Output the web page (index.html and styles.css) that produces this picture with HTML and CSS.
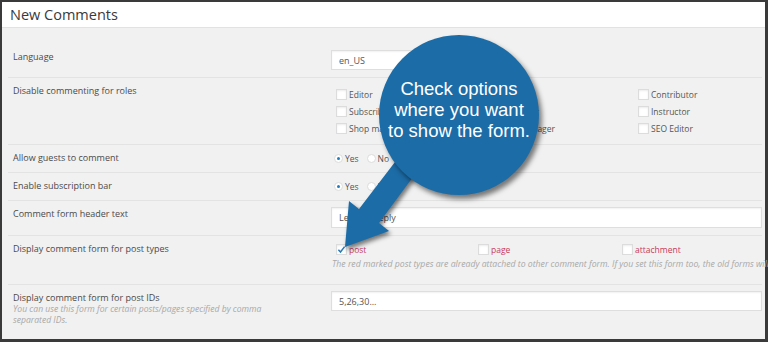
FILE: index.html
```html
<!DOCTYPE html>
<html>
<head>
<meta charset="utf-8">
<link rel="stylesheet" href="styles.css">
</head>
<body>
<div class="shot">
  <div class="frame">
    <div class="hd">New Comments</div>
    <div class="panel">
      <div class="row first">
        <div class="lbl">Language</div>
        <div class="fld"><div class="inp short">en_US</div></div>
      </div>
      <div class="row">
        <div class="lbl">Disable commenting for roles</div>
        <div class="fld">
          <div class="checks roles">
            <label class="opt"><span class="cb"></span>Editor</label>
            <label class="opt"><span class="cb"></span>Author</label>
            <label class="opt"><span class="cb"></span>Contributor</label>
            <label class="opt"><span class="cb"></span>Subscriber</label>
            <label class="opt"><span class="cb"></span>Customer</label>
            <label class="opt"><span class="cb"></span>Instructor</label>
            <label class="opt"><span class="cb"></span>Shop manager</label>
            <label class="opt"><span class="cb"></span>Blog manager</label>
            <label class="opt"><span class="cb"></span>SEO Editor</label>
          </div>
        </div>
      </div>
      <div class="row">
        <div class="lbl">Allow guests to comment</div>
        <div class="fld">
          <div class="radios">
            <span class="rd on"></span><span class="rtxt">Yes</span>
            <span class="rd"></span><span class="rtxt">No</span>
          </div>
        </div>
      </div>
      <div class="row">
        <div class="lbl">Enable subscription bar</div>
        <div class="fld">
          <div class="radios">
            <span class="rd on"></span><span class="rtxt">Yes</span>
            <span class="rd"></span><span class="rtxt">No</span>
          </div>
        </div>
      </div>
      <div class="row">
        <div class="lbl">Comment form header text</div>
        <div class="fld"><div class="inp tall">Leave a Reply</div></div>
      </div>
      <div class="row">
        <div class="lbl">Display comment form for post types</div>
        <div class="fld">
          <div class="checks types">
            <label class="opt red"><span class="cb"><svg class="tick" viewBox="0 0 11 11"><path d="M2.4 5.8 L4.5 8 L8.6 2.6"/></svg></span>post</label>
            <label class="opt red"><span class="cb"></span>page</label>
            <label class="opt red"><span class="cb"></span>attachment</label>
          </div>
          <p class="note">The red marked post types are already attached to other comment form. If you set this form too, the old forms will not be used.</p>
        </div>
      </div>
      <div class="row">
        <div class="lbl">Display comment form for post IDs
          <p class="hint">You can use this form for certain posts/pages specified by comma separated IDs.</p>
        </div>
        <div class="fld"><div class="inp">5,26,30...</div></div>
      </div>
    </div>
  </div>
  <svg class="arrow" viewBox="0 0 768 342" width="768" height="342">
    <polygon points="345,247 349,201 359,209 408,145 427,158 379,223 389,231"/>
  </svg>
  <div class="bubble"><div class="btxt">Check options<br>where you want<br>to show the form.</div></div>
</div>
</body>
</html>
```
FILE: styles.css
```css
body {
  margin: 0;
  background: #fff;
  font-family: "Open Sans", "Liberation Sans", sans-serif;
}
.shot {
  position: relative;
  width: 768px;
  height: 342px;
  overflow: hidden;
}
.frame {
  box-sizing: border-box;
  width: 768px;
  height: 342px;
  border-style: solid;
  border-color: #3a3a3a;
  border-width: 2px 3px 3px 2px;
  background: #f1f1f1;
  display: flex;
  flex-direction: column;
}
.hd {
  background: #fff;
  height: 25px;
  line-height: 25px;
  border-bottom: 1px solid #e2e2e2;
  font-size: 14.5px;
  color: #3a3a3a;
  padding-left: 8px;
  flex: none;
}
.panel {
  padding: 16px 3px 0 6px;
}
.row {
  display: grid;
  grid-template-columns: 318px 1fr;
  padding: 6px 0 7px 5px;
  border-top: 1px solid #e3e3e3;
  min-height: 14px;
}
.row.first {
  border-top: 0;
}
.lbl {
  font-size: 9px;
  line-height: 13px;
  color: #4a4a4a;
}
.hint {
  margin: 0;
  width: 262px;
  font-size: 8.6px;
  line-height: 11px;
  font-style: italic;
  color: #a8a8a8;
}
.inp {
  box-sizing: border-box;
  height: 20px;
  border: 1px solid #dedede;
  background: #fff;
  box-shadow: inset 0 1px 2px rgba(0, 0, 0, 0.06);
  font-size: 9px;
  color: #555;
  padding-left: 7px;
  display: flex;
  align-items: center;
}
.inp.short {
  width: 170px;
}
.inp.tall {
  height: 21px;
}
.checks {
  display: grid;
  margin-left: 5px;
}
.checks.roles {
  grid-template-columns: repeat(3, 151px);
  margin-top: 2px;
}
.checks.types {
  grid-template-columns: 142px 144px auto;
}
.opt {
  display: flex;
  align-items: center;
  gap: 2px;
  font-size: 8.5px;
  color: #555;
  height: 17px;
}
.types .opt {
  height: 14px;
}
.opt.red {
  color: #c73a5c;
}
.cb {
  box-sizing: border-box;
  width: 11px;
  height: 11px;
  border: 1px solid #dcdcdc;
  background: #fff;
  box-shadow: inset 0 1px 2px rgba(0, 0, 0, 0.08);
  flex: none;
  position: relative;
}
.tick {
  position: absolute;
  left: -1px;
  top: -1px;
  width: 11px;
  height: 11px;
}
.tick path {
  fill: none;
  stroke: #2a7ab8;
  stroke-width: 1.5;
}
.note {
  margin: 1px 0 6px 1px;
  font-size: 8.7px;
  line-height: 14px;
  font-style: italic;
  color: #a8a8a8;
  white-space: nowrap;
}
.radios {
  display: flex;
  align-items: center;
  height: 14px;
  margin-left: 3px;
}
.rd {
  box-sizing: border-box;
  width: 9px;
  height: 9px;
  border-radius: 50%;
  border: 1px solid #dcdcdc;
  background: #fff;
  flex: none;
  position: relative;
}
.rd.on::after {
  content: "";
  position: absolute;
  left: 2px;
  top: 2px;
  width: 3px;
  height: 3px;
  border-radius: 50%;
  background: #1e7fc0;
}
.rtxt {
  font-size: 8.5px;
  color: #555;
  margin: 0 8px 0 2px;
}
.arrow {
  position: absolute;
  left: 0;
  top: 0;
  filter: drop-shadow(2px 3px 2px rgba(0, 0, 0, 0.5));
}
.arrow polygon {
  fill: #1c6ca7;
}
.bubble {
  position: absolute;
  left: 379px;
  top: 35px;
  width: 160px;
  height: 160px;
  border-radius: 50%;
  background: #1c6ca7;
  box-shadow: 3px 4px 5px rgba(0, 0, 0, 0.5);
  display: flex;
  align-items: center;
  justify-content: center;
}
.btxt {
  font-family: "Liberation Sans", Arial, sans-serif;
  font-size: 18.5px;
  line-height: 21px;
  color: #fff;
  text-align: center;
  padding-bottom: 11px;
}
```
